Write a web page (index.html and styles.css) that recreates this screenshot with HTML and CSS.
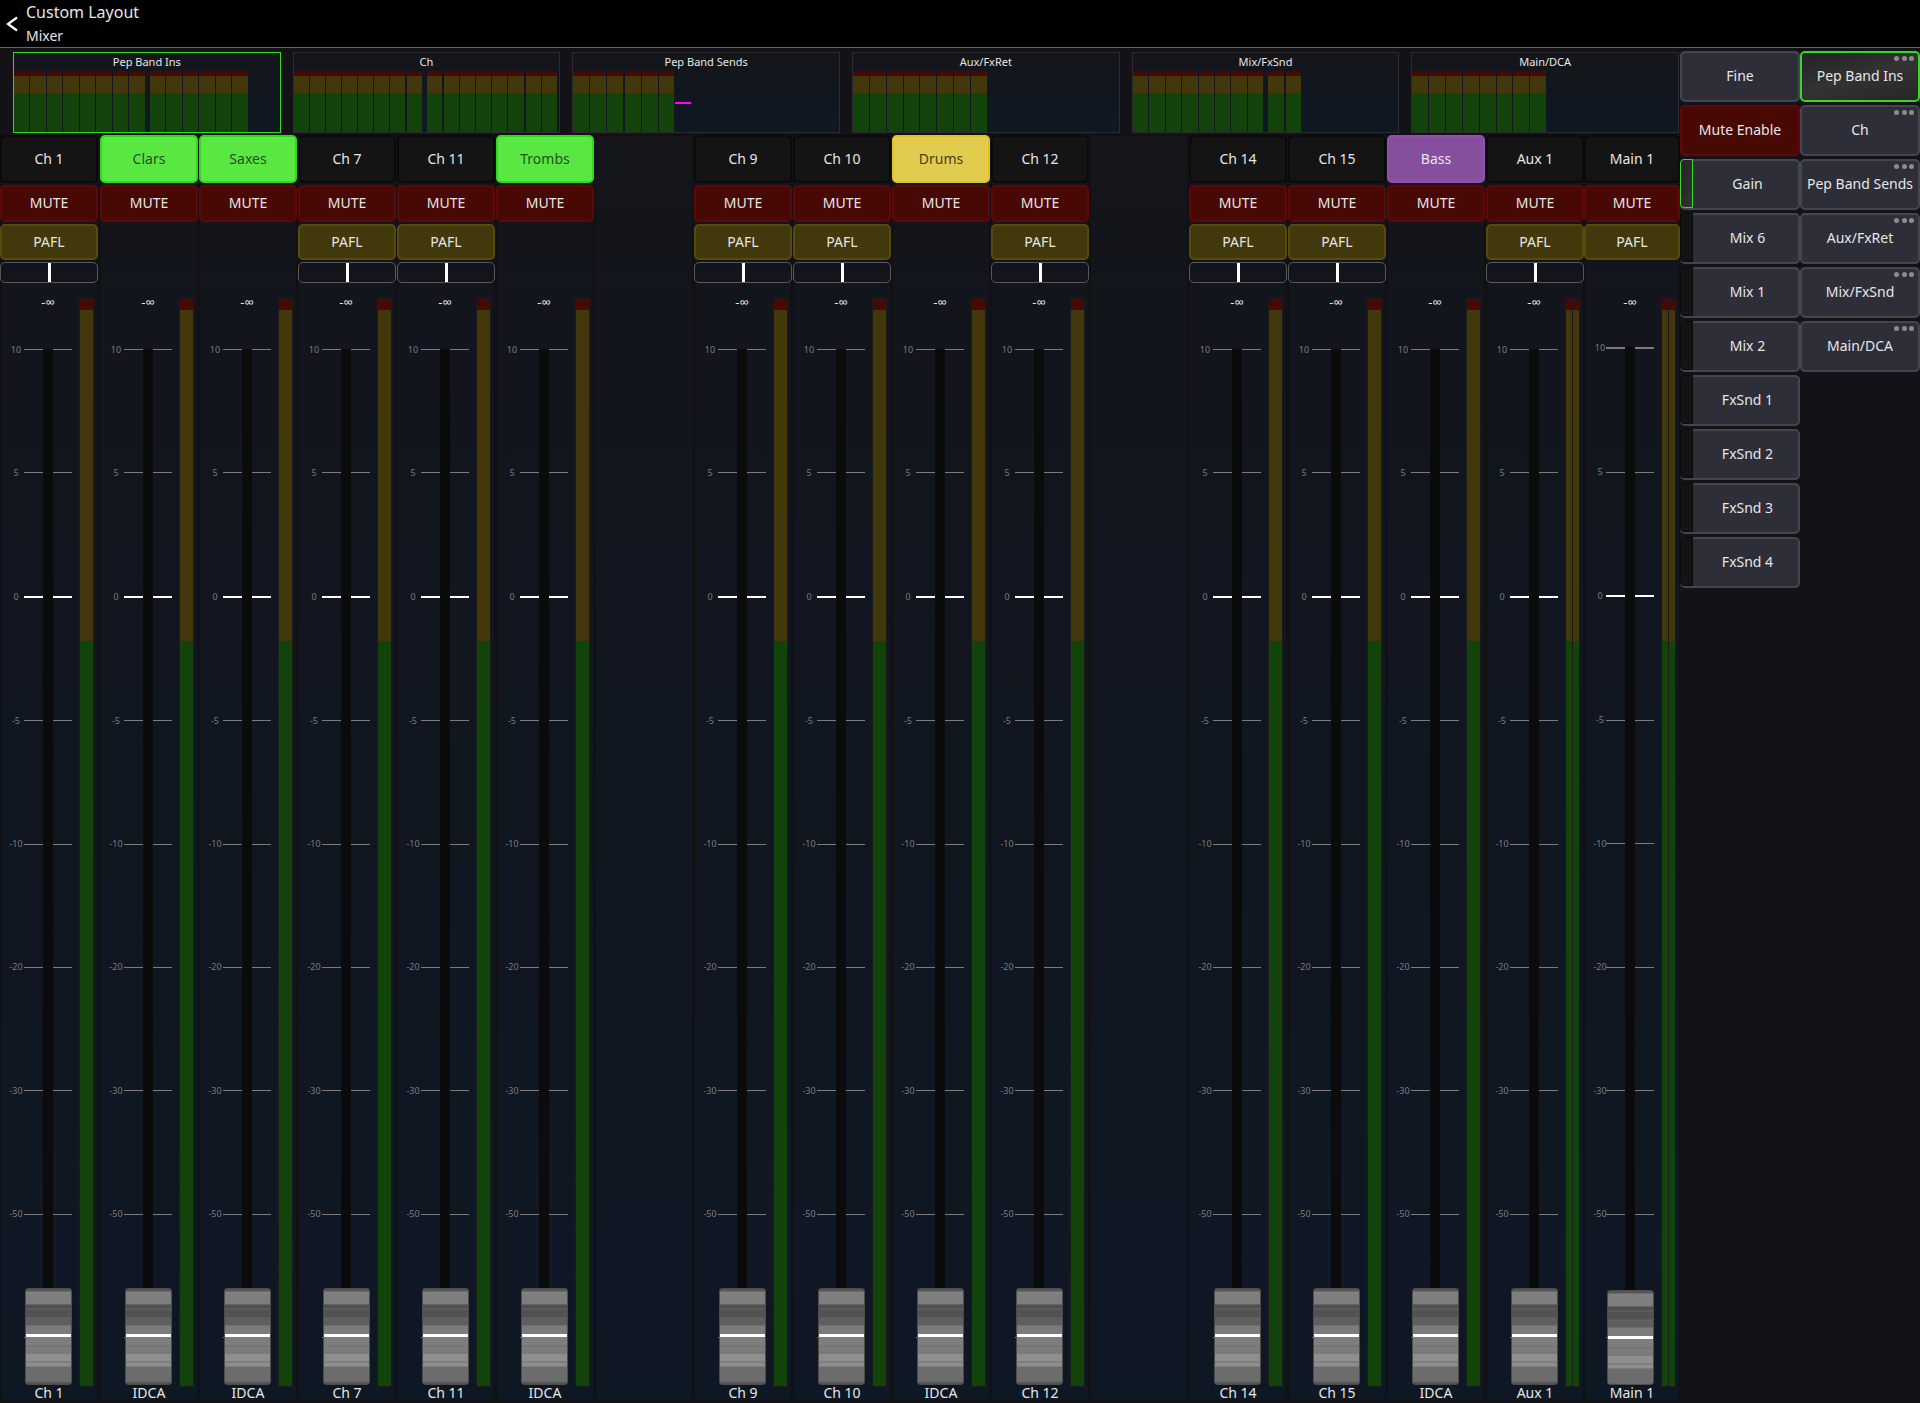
FILE: index.html
```
<!DOCTYPE html>
<html lang="en">
  <head>
    <meta charset="UTF-8" />
    <meta name="viewport" content="width=device-width, initial-scale=1.0" />
    <title>Custom Layout - Mixer</title>
    <link rel="stylesheet" href="styles.css">
  </head>
  <body>
    <header class="topbar">
      <button class="back" type="button" aria-label="Back">
        <svg width="12" height="16" viewBox="0 0 12 16"><path d="M11 1.5 L2 8 L11 14.5" fill="none" stroke="#fff" stroke-width="2.2" /></svg>
      </button>
      <div>
        <h1>Custom Layout</h1>
        <h2>Mixer</h2>
      </div>
    </header>
    <div class="layout">
      <main class="mixer">
        <nav class="previews" id="previews"></nav>
        <section class="strips" id="strips"></section>
      </main>
      <aside class="sidebar">
        <div class="column">
          <button type="button">Fine</button>
          <button type="button" class="mute-enable">Mute Enable</button>
          <button type="button" class="send active">Gain</button>
          <button type="button" class="send">Mix 6</button>
          <button type="button" class="send">Mix 1</button>
          <button type="button" class="send">Mix 2</button>
          <button type="button" class="send">FxSnd 1</button>
          <button type="button" class="send">FxSnd 2</button>
          <button type="button" class="send">FxSnd 3</button>
          <button type="button" class="send">FxSnd 4</button>
        </div>
        <div class="column">
          <button type="button" class="layer active">Pep Band Ins</button>
          <button type="button" class="layer">Ch</button>
          <button type="button" class="layer">Pep Band Sends</button>
          <button type="button" class="layer">Aux/FxRet</button>
          <button type="button" class="layer">Mix/FxSnd</button>
          <button type="button" class="layer">Main/DCA</button>
        </div>
      </aside>
    </div>
    <script type="text/javascript">
      // bars: "|" is a meter, "+" a meter after a wide gap, "." after a small gap, "-" a DCA level
      var previews = [
        { name: 'Pep Band Ins', bars: '||||||||+|||||', size: 'dense', active: true },
        { name: 'Ch', bars: '|||||||.+.||||.|', size: 'tight' },
        { name: 'Pep Band Sends', bars: '|||.||-' },
        { name: 'Aux/FxRet', bars: '||||||||' },
        { name: 'Mix/FxSnd', bars: '||||||||+.', size: 'dense' },
        { name: 'Main/DCA', bars: '||||||||' }
      ];

      var strips = [
        { name: 'Ch 1', pafl: true, pan: true },
        { name: 'Clars', color: 'green', label: 'IDCA' },
        { name: 'Saxes', color: 'green', label: 'IDCA' },
        { name: 'Ch 7', pafl: true, pan: true },
        { name: 'Ch 11', pafl: true, pan: true },
        { name: 'Trombs', color: 'green', label: 'IDCA' },
        null,
        { name: 'Ch 9', pafl: true, pan: true },
        { name: 'Ch 10', pafl: true, pan: true },
        { name: 'Drums', color: 'yellow', label: 'IDCA' },
        { name: 'Ch 12', pafl: true, pan: true },
        null,
        { name: 'Ch 14', pafl: true, pan: true },
        { name: 'Ch 15', pafl: true, pan: true },
        { name: 'Bass', color: 'purple', label: 'IDCA' },
        { name: 'Aux 1', pafl: true, pan: true, stereo: true },
        { name: 'Main 1', pafl: true, stereo: true, main: true }
      ];

      var barClasses = { '|': 'bar', '+': 'bar gap', '.': 'bar gap-small', '-': 'dca' };
      // the last mark is the bottom of the travel and has no label
      var marks = ['10', '5', '0', '-5', '-10', '-20', '-30', '-50', ''];

      function renderPreview(preview) {
        var bars = preview.bars.split('').map(function(type) {
          return `<i class="${barClasses[type]}"></i>`;
        });
        return `
          <button type="button" class="preview ${preview.active ? 'active' : ''}">
            <span class="preview-name">${preview.name}</span>
            <span class="bars ${preview.size || ''}">${bars.join('')}</span>
          </button>
        `;
      }

      function renderStrip(strip) {
        if (!strip) {
          return '<div class="strip"></div>';
        }
        const scale = marks.map(mark => `<li class="mark-${mark}"><span>${mark}</span></li>`);
        return `
          <div class="strip ${strip.main ? 'main' : ''}">
            <button type="button" class="name ${strip.color || ''}">${strip.name}</button>
            <button type="button" class="mute">MUTE</button>
            ${strip.pafl ? '<button type="button" class="pafl">PAFL</button>' : ''}
            ${strip.pan ? `<input type="range" class="pan" aria-label="${strip.name} pan" />` : ''}
            <div class="fader">
              <span class="level">-∞</span>
              <ul class="scale">${scale.join('')}</ul>
              <input type="range" class="slider" value="0" aria-label="${strip.name} level" />
              <div class="meter"><i></i>${strip.stereo ? '<i></i>' : ''}</div>
            </div>
            <div class="label">${strip.label || strip.name}</div>
          </div>
        `;
      }

      document.getElementById('previews').innerHTML = previews.map(renderPreview).join('');
      document.getElementById('strips').innerHTML = strips.map(renderStrip).join('');
    </script>
  </body>
</html>
```
FILE: styles.css
```
*,
*::before,
*::after {
  box-sizing: border-box;
}

body {
  display: flex;
  flex-direction: column;
  min-height: 100vh;
  margin: 0;
  font-family: 'Noto Sans', 'Open Sans', sans-serif;
  font-size: 14px;
  color: #e6e6e6;
  background: #131317;
}

button {
  position: relative;
  margin: 0;
  padding: 0 0 2px;
  font-family: inherit;
  font-size: inherit;
  color: inherit;
  white-space: nowrap;
  border: 2px solid #45454f;
  border-radius: 5px;
  background: #2e2e38;
  cursor: pointer;
}

/* Top bar */

.topbar {
  display: flex;
  align-items: center;
  gap: 8px;
  height: 48px;
  padding-left: 6px;
  background: #000;
  border-bottom: 1px solid #66665f;
}

.back {
  display: flex;
  padding: 0;
  border: none;
  background: none;
}

h1,
h2 {
  margin: 0;
  font-weight: 400;
}

h1 {
  font-size: 16px;
  line-height: 24px;
}

h2 {
  font-size: 14px;
  line-height: 23px;
}

.layout {
  display: flex;
  flex: 1;
}

.mixer {
  display: flex;
  flex: 1;
  flex-direction: column;
  min-width: 0;
}

/* Layer previews */

.previews {
  display: grid;
  grid-template-columns: repeat(6, minmax(0, 1fr));
  gap: 12px;
  padding: 4px 1px 2px 13px;
}

.preview {
  display: flex;
  flex-direction: column;
  height: 81px;
  padding: 0;
  font-size: 11px;
  border: 1px solid #2c2c2e;
  border-radius: 0;
  background: linear-gradient(#15151a, #0e1824);
}

.preview.active {
  border-color: #33d922;
}

.preview-name {
  width: 100%;
  line-height: 18px;
  text-align: center;
}

.bars {
  display: flex;
  flex: 1;
  gap: 1px;
  width: 100%;
}

.bars i {
  flex: none;
  width: calc(6.35% - 1px);
}

.bars.dense i {
  width: calc(6.2% - 1px);
}

.bars.tight i {
  width: calc(6.05% - 1px);
}

.bar {
  background: linear-gradient(#480804 5px, #43380b 5px, #43380b 22px, #12430a 22px);
}

.bars .gap {
  margin-left: 4px;
}

.bars .gap-small {
  margin-left: 1px;
}

.dca {
  height: 2px;
  margin-top: 31px;
  background: #f0f;
}

/* Channel strips */

.strips {
  display: grid;
  flex: 1;
  grid-template-columns: repeat(16, minmax(0, 99fr)) minmax(0, 96fr);
  padding-bottom: 2px;
}

.strip {
  display: grid;
  grid-template-rows: 48px 37px 36px 21px 1fr 14px;
  grid-template-columns: minmax(0, 1fr);
  row-gap: 2px;
  min-height: 700px;
  margin-left: 1px;
  border-radius: 4px;
  background: linear-gradient(#15151a, #12151e 20%, #0e1824);
  box-shadow: inset 0 0 0 1px #101012;
}

.strip:first-child {
  margin: 0 1px 0 0;
}

.strip.main {
  margin-left: 0;
}

.name {
  grid-row: 1;
  border-color: #0a0a0a;
  background: #141414;
}

.name.green {
  color: #284d20;
  border-color: #31d81e;
  background: #59e842;
}

.name.yellow {
  color: #45401f;
  border-color: #e3c224;
  background: #e2cc4d;
}

.name.purple {
  border-color: #924fae;
  background: #864f9d;
}

.mute {
  grid-row: 2;
}

.mute,
.sidebar .mute-enable {
  border-color: #5e0907;
  background: #480804;
}

.pafl {
  grid-row: 3;
  border-color: #564a0e;
  background: #41380b;
}

.pan {
  grid-row: 4;
  width: 100%;
  height: 21px;
  margin: 0;
  -webkit-appearance: none;
  appearance: none;
  border: 1px solid #58585a;
  border-radius: 5px;
  background: transparent;
}

.pan::-webkit-slider-thumb {
  -webkit-appearance: none;
  width: 3px;
  height: 19px;
  background: #fff;
}

.fader {
  display: grid;
  grid-row: 5;
  grid-template-rows: 51px 1fr;
  grid-template-columns: 1fr 48px 7px 15px 4px;
  margin-top: 13px;
}

.main .fader {
  grid-template-rows: 49px 1fr;
}

.level {
  grid-row: 1;
  grid-column: 2;
  font-size: 13px;
  line-height: 8px;
  text-align: center;
}

.scale {
  display: flex;
  grid-row: 2;
  grid-column: 1 / 3;
  flex-direction: column;
  justify-content: space-between;
  margin: 0 0 47px;
  padding: 0;
  list-style: none;
}

.scale li {
  display: flex;
  align-items: center;
  height: 1px;
  background: linear-gradient(#7c7c7c, #7c7c7c) right / 48px 100% no-repeat;
}

.scale li.mark-0 {
  height: 2px;
  background-image: linear-gradient(#fff, #fff);
}

.main .scale li.mark-10 {
  height: 2px;
}

.scale span {
  width: 14px;
  margin-left: 9px;
  font-size: 9px;
  line-height: 10px;
  text-align: center;
  color: #7c7c7c;
}

.slider {
  grid-row: 2;
  grid-column: 2;
  width: 48px;
  height: 100%;
  margin: 0;
  -webkit-appearance: none;
  appearance: none;
  writing-mode: vertical-lr;
  direction: rtl;
  background: linear-gradient(#0b0b0b, #0b0b0b) center / 10px 100% no-repeat;
}

.slider::-webkit-slider-thumb {
  -webkit-appearance: none;
  width: 47px;
  height: 97px;
  border: 1px solid #4c4c4c;
  border-radius: 3px;
  background: linear-gradient(
    #565656 2px,
    #808080 3px, #7c7c7c 15px,
    #505050 16px, #505050 19px,
    #636363 20px, #525252 21px, #525252 28px,
    #666 29px, #5e5e5e 30px, #5e5e5e 36px,
    #7c7c7c 37px, #7c7c7c 45px,
    #fff 45px, #fff 48px,
    #7e7e7e 48px, #7e7e7e 56px,
    #6e6e6e 57px, #7c7c7c 58px, #7c7c7c 63px,
    #6e6e6e 64px, #8e8e8e 65px, #8e8e8e 72px,
    #707070 73px, #8e8e8e 74px, #8e8e8e 77px,
    #6c6c6c 78px, #6c6c6c 92px,
    #4c4c4c 95px
  );
}

.main .slider::-webkit-slider-thumb {
  height: 95px;
}

.meter {
  display: flex;
  grid-row: 1 / 3;
  grid-column: 4;
  gap: 1px;
  margin-bottom: -2px;
  padding: 1px;
  background: #1a1c1c;
}

.meter i {
  flex: 1;
  background: linear-gradient(#480804 11px, #43380b 11px, #43380b 31.5%, #12430a 31.5%);
}

.label {
  grid-row: 6;
  line-height: 12px;
  text-align: center;
}

/* Sidebar */

.sidebar {
  display: flex;
  flex: none;
  width: 240px;
  padding-top: 3px;
}

.column {
  display: flex;
  flex: 1;
  flex-direction: column;
  gap: 3px;
}

.column button {
  height: 51px;
}

.column .send {
  padding-left: 15px;
}

.send::before {
  content: '';
  position: absolute;
  top: -2px;
  bottom: 0;
  left: -2px;
  width: 13px;
  border: 1px solid #0a0a0a;
  border-radius: 4px 0 0 4px;
  background: #141414;
}

.send.active::before {
  border-color: #33d922;
  background: linear-gradient(100deg, #222, #333);
}

.layer.active {
  border-color: #33d922;
  background: linear-gradient(165deg, #222, #333 50%, #262626);
}

.layer::after {
  content: '';
  position: absolute;
  top: 3px;
  right: 4px;
  width: 5px;
  height: 5px;
  border-radius: 50%;
  background: #8c8c8c;
  box-shadow: -7px 0 #8c8c8c, -15px 0 #8c8c8c;
}
```
